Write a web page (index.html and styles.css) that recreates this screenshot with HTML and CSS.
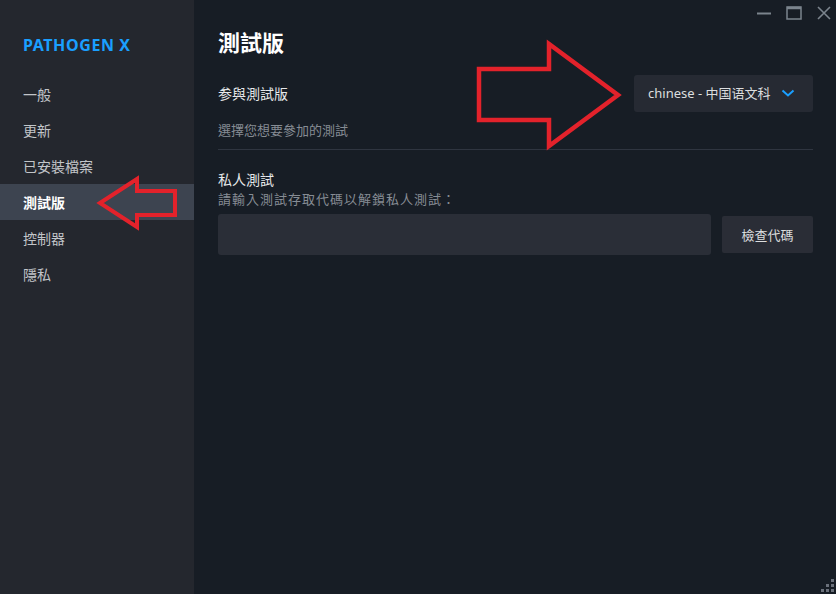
FILE: index.html
```html
<!DOCTYPE html>
<html lang="zh-Hant">
<head>
<meta charset="utf-8">
<title>PATHOGEN X - 測試版</title>
<link rel="stylesheet" href="styles.css">
</head>
<body>
<div class="app">
  <aside class="sidebar">
    <div class="logo">PATHOGEN X</div>
    <nav class="nav">
      <div class="nav-item">一般</div>
      <div class="nav-item">更新</div>
      <div class="nav-item">已安裝檔案</div>
      <div class="nav-item active">測試版</div>
      <div class="nav-item">控制器</div>
      <div class="nav-item">隱私</div>
    </nav>
  </aside>
  <main class="main">
    <div class="titlebar">
      <svg class="wc" width="16" height="16" viewBox="0 0 16 16"><path d="M1 8.5H15" stroke="#7b848d" stroke-width="2"/></svg>
      <svg class="wc" width="16" height="16" viewBox="0 0 16 16"><rect x="1" y="2" width="14" height="12" fill="none" stroke="#7b848d" stroke-width="1.5"/><path d="M1 3H15" stroke="#7b848d" stroke-width="2.5"/></svg>
      <svg class="wc" width="16" height="16" viewBox="0 0 16 16"><path d="M2 2L14 14M14 2L2 14" stroke="#7b848d" stroke-width="1.6"/></svg>
    </div>
    <h1 class="heading">測試版</h1>
    <div class="row">
      <div class="label">参與測試版</div>
      <div class="dropdown">
        <span>chinese - 中国语文科</span>
        <svg width="14" height="10" viewBox="0 0 14 10"><path d="M1.5 2.5L7 7.5L12.5 2.5" fill="none" stroke="#1a9fff" stroke-width="2"/></svg>
      </div>
    </div>
    <div class="sub">選擇您想要參加的測試</div>
    <div class="divider"></div>
    <div class="label private">私人測試</div>
    <div class="sub tight">請輸入測試存取代碼以解鎖私人測試：</div>
    <div class="code-row">
      <div class="input"></div>
      <div class="button">檢查代碼</div>
    </div>
  </main>
</div>
<svg class="annot" width="836" height="594" viewBox="0 0 836 594">
  <polygon points="100,203 137,179 137,191 175,191 175,215 137,215 137,227" fill="none" stroke="#e3222b" stroke-width="4" stroke-linejoin="miter"/>
  <polygon points="479,69 549,69 549,44 618,95 549,146 549,120 479,120" fill="none" stroke="#e3222b" stroke-width="4.5" stroke-linejoin="miter"/>
</svg>
<div class="grip">
  <i style="left:10px;top:0"></i>
  <i style="left:5px;top:5px"></i><i style="left:10px;top:5px"></i>
  <i style="left:0;top:10px"></i><i style="left:5px;top:10px"></i><i style="left:10px;top:10px"></i>
</div>
</body>
</html>
```
FILE: styles.css
```css
html, body {
  margin: 0;
  padding: 0;
  width: 836px;
  height: 594px;
  overflow: hidden;
  background: #171d25;
  font-family: "Noto Sans", "Liberation Sans", "Noto Sans CJK TC", sans-serif;
  color: #dcdedf;
}
.app {
  display: flex;
  width: 836px;
  height: 594px;
}
.sidebar {
  width: 194px;
  flex: none;
  background: #24272e;
  padding-top: 34px;
  box-sizing: border-box;
}
.logo {
  padding-left: 23px;
  font-size: 16px;
  line-height: 22px;
  font-weight: 700;
  color: #1a9fff;
  letter-spacing: 0.6px;
  height: 22px;
  margin-bottom: 20px;
}
.nav {
  display: flex;
  flex-direction: column;
}
.nav-item {
  height: 36px;
  line-height: 36px;
  padding-left: 23px;
  font-size: 14px;
  color: #c2c5c9;
  font-family: "Noto Sans CJK TC", sans-serif;
}
.nav-item.active {
  background: #3d4450;
  color: #ffffff;
  font-weight: 700;
}
.main {
  flex: 1;
  padding: 0 23px 0 24px;
  position: relative;
}
.titlebar {
  height: 26px;
  display: flex;
  justify-content: flex-end;
  align-items: flex-start;
  gap: 14px;
  margin-right: -19px;
  padding-top: 5px;
  box-sizing: border-box;
}
.wc { display: block; }
.heading {
  margin: 0;
  font-size: 22px;
  line-height: 30px;
  font-weight: 700;
  color: #ffffff;
  font-family: "Noto Sans CJK TC", sans-serif;
}
.row {
  margin-top: 19px;
  display: flex;
  justify-content: space-between;
  align-items: center;
}
.label {
  font-size: 14px;
  line-height: 20px;
  color: #e6e8ea;
  font-family: "Noto Sans CJK TC", sans-serif;
}
.row .label { margin-top: -1px; }
.dropdown {
  width: 179px;
  height: 37px;
  box-sizing: border-box;
  background: #262a33;
  border-radius: 3px;
  display: flex;
  align-items: center;
  padding-left: 14px;
  padding-bottom: 3px;
  gap: 10px;
  font-size: 13px;
  color: #dcdedf;
  font-family: "Noto Sans", "Noto Sans CJK SC", sans-serif;
}
.dropdown svg { display: block; margin-top: 1px; }
.sub {
  margin-top: 9px;
  font-size: 13px;
  line-height: 18px;
  color: #868c94;
  font-family: "Noto Sans CJK TC", sans-serif;
}
.sub.tight {
  margin-top: 1px;
  letter-spacing: 1px;
}
.divider {
  margin-top: 10px;
  height: 1px;
  background: #2f3540;
}
.private {
  margin-top: 19px;
}
.code-row {
  margin-top: 6px;
  display: flex;
  align-items: center;
  gap: 11px;
}
.input {
  flex: 1;
  height: 41px;
  background: #2a2e37;
  border-radius: 3px;
}
.button {
  width: 91px;
  height: 37px;
  line-height: 37px;
  text-align: center;
  background: #2a2d36;
  border-radius: 2px;
  font-size: 13px;
  color: #dcdedf;
  font-family: "Noto Sans CJK TC", sans-serif;
}
.annot {
  position: absolute;
  left: 0;
  top: 0;
  pointer-events: none;
}
.grip {
  position: absolute;
  right: 2px;
  bottom: 2px;
  width: 13px;
  height: 13px;
}
.grip i {
  position: absolute;
  width: 3px;
  height: 3px;
  background: #6a707a;
}
```
